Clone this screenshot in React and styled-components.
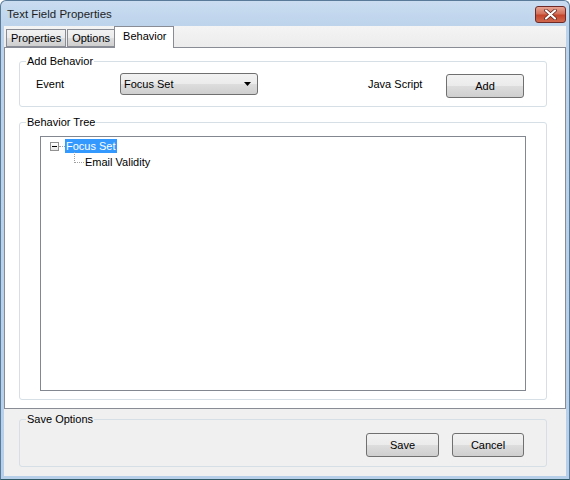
import React from "react";
import styled, { createGlobalStyle } from "styled-components";

const GlobalStyle = createGlobalStyle`
  html, body { margin: 0; padding: 0; background: #fff; }
  body {
    font-family: "Liberation Sans", Arial, sans-serif;
    font-size: 11px;
    color: #000;
  }
`;

const Window = styled.div`
  width: 570px;
  height: 480px;
  box-sizing: border-box;
  border: 1px solid #5a7a99;
  border-bottom-color: #2f5a66;
  border-radius: 6px 6px 0 0;
  background: linear-gradient(to bottom, #c9dcf0 0px, #bcd3eb 26px, #b7cfe9 100%);
  padding: 0 3px 3px 3px;
  display: flex;
  flex-direction: column;
`;

const TitleBar = styled.div`
  height: 25px;
  display: flex;
  align-items: center;
  justify-content: space-between;
  padding: 0 0 0 3px;
`;

const Title = styled.span`
  font-size: 11.5px;
  color: #1e1e1e;
`;

const CloseButton = styled.div`
  width: 31px;
  height: 17px;
  margin-top: 1px;
  box-sizing: border-box;
  border: 1px solid #6d2a26;
  border-radius: 3px;
  background: linear-gradient(to bottom, #e8a493 0%, #d3705b 45%, #c4452c 55%, #d0694f 100%);
  display: flex;
  align-items: center;
  justify-content: center;
`;

const Client = styled.div`
  flex: 1;
  background: #f0f0f0;
  display: flex;
  flex-direction: column;
`;

const TabStrip = styled.div`
  height: 21px;
  display: flex;
  align-items: flex-end;
  padding-left: 1px;
  position: relative;
  z-index: 1;
  background: linear-gradient(to bottom, #f4f4f4, #ececec);
`;

const Tab = styled.div`
  box-sizing: border-box;
  height: ${({ active }) => (active ? "22px" : "18px")};
  margin-bottom: ${({ active }) => (active ? "-1px" : "0")};
  margin-left: ${({ active }) => (active ? "-1px" : "1px")};
  padding: ${({ active }) => (active ? "3px 7px 0 8px" : "2px 4px 0")};
  border: 1px solid #898c95;
  border-bottom: ${({ active }) => (active ? "none" : "1px solid #898c95")};
  background: ${({ active }) =>
    active ? "#fff" : "linear-gradient(to bottom, #f2f2f2 0%, #ebebeb 50%, #dddddd 51%, #cfcfcf 100%)"};
  font-size: 11px;
  line-height: 13px;
`;

const Panel = styled.div`
  height: 362px;
  box-sizing: border-box;
  background: #fff;
  border: 1px solid #898c95;
  padding: 7px 17px 8px 14px;
  display: flex;
  flex-direction: column;
  gap: 9px;
`;

const Group = styled.fieldset`
  margin: 0;
  padding: 0;
  border: 1px solid #d5dfe5;
  border-radius: 3px;
  min-width: 0;
  width: 528px;
  box-sizing: border-box;
`;

const Legend = styled.legend`
  margin-left: 6px;
  padding: 0 1px;
  font-size: 11px;
  line-height: 13px;
`;

const GroupBody = styled.div`
  padding: ${({ pad }) => pad};
`;

const Row = styled.div`
  display: flex;
  align-items: flex-start;
  justify-content: ${({ end }) => (end ? "flex-end" : "flex-start")};
  gap: ${({ gap }) => gap || 0}px;
`;

const Label = styled.span`
  width: ${({ w }) => w}px;
  margin-left: ${({ ml }) => ml || 0}px;
  line-height: 22px;
  font-size: 11px;
`;

const Combo = styled.div`
  width: 138px;
  height: 22px;
  box-sizing: border-box;
  border: 1px solid #707070;
  border-radius: 3px;
  background: linear-gradient(to bottom, #f2f2f2 0%, #ebebeb 50%, #dddddd 51%, #cfcfcf 100%);
  display: flex;
  align-items: center;
  justify-content: space-between;
  padding: 0 6px 0 3px;
  font-size: 11px;
`;

const Button = styled.div`
  width: ${({ w }) => w}px;
  height: 24px;
  margin-top: ${({ mt }) => mt || 0}px;
  box-sizing: border-box;
  border: 1px solid #707070;
  border-radius: 3px;
  background: linear-gradient(to bottom, #f2f2f2 0%, #ebebeb 50%, #dddddd 51%, #cfcfcf 100%);
  display: flex;
  align-items: center;
  justify-content: center;
  font-size: 11px;
`;

const TreeBox = styled.div`
  width: 486px;
  height: 255px;
  box-sizing: border-box;
  border: 1px solid #828790;
  background: #fff;
  padding: 2px 0 0 9px;
`;

const TreeRow = styled.div`
  height: 14px;
  display: flex;
  align-items: center;
  padding-left: ${({ indent }) => indent || 0}px;
  margin-top: ${({ mt }) => mt || 0}px;
`;

const Expander = styled.div`
  width: 9px;
  height: 9px;
  box-sizing: border-box;
  border: 1px solid #919191;
  background: linear-gradient(to bottom, #fff, #e6e6e6);
  display: flex;
  align-items: center;
  justify-content: center;
  &::after {
    content: "";
    width: 5px;
    height: 1px;
    background: #000;
  }
`;

const HLine = styled.div`
  width: ${({ w }) => w}px;
  border-top: 1px dotted #a0a0a0;
`;

const Elbow = styled.div`
  width: 10px;
  height: 11px;
  align-self: flex-end;
  margin-bottom: 6px;
  border-left: 1px dotted #a0a0a0;
  border-bottom: 1px dotted #a0a0a0;
  box-sizing: border-box;
`;

const NodeText = styled.span`
  padding: 0 1px;
  line-height: 14px;
  font-size: 11px;
  background: ${({ selected }) => (selected ? "#3399ff" : "transparent")};
  color: ${({ selected }) => (selected ? "#fff" : "#000")};
`;

const SaveArea = styled.div`
  flex: 1;
  padding: 4px 0 0 15px;
`;

export default function App() {
  return (
    <>
      <GlobalStyle />
      <Window>
        <TitleBar>
          <Title>Text Field Properties</Title>
          <CloseButton>
            <svg width="13" height="11" viewBox="0 0 13 11">
              <path d="M2 1.5 L11 9.5 M11 1.5 L2 9.5" stroke="#5a1d18" strokeWidth="3.6" strokeLinecap="round" />
              <path d="M2 1.5 L11 9.5 M11 1.5 L2 9.5" stroke="#fff" strokeWidth="2.2" strokeLinecap="round" />
            </svg>
          </CloseButton>
        </TitleBar>
        <Client>
          <TabStrip>
            <Tab>Properties</Tab>
            <Tab>Options</Tab>
            <Tab active>Behavior</Tab>
          </TabStrip>
          <Panel>
            <Group>
              <Legend>Add Behavior</Legend>
              <GroupBody pad="5px 0 8px 16px">
                <Row>
                  <Label w={84}>Event</Label>
                  <Combo>
                    <span>Focus Set</span>
                    <svg width="7" height="4" viewBox="0 0 7 4">
                      <path d="M0 0 H7 L3.5 4 Z" fill="#000" />
                    </svg>
                  </Combo>
                  <Label w={78} ml={110}>Java Script</Label>
                  <Button w={78} mt={1}>Add</Button>
                </Row>
              </GroupBody>
            </Group>
            <Group>
              <Legend>Behavior Tree</Legend>
              <GroupBody pad="7px 0 8px 20px">
                <TreeBox>
                  <TreeRow>
                    <Expander />
                    <HLine w={6} />
                    <NodeText selected>Focus Set</NodeText>
                  </TreeRow>
                  <TreeRow indent={24} mt={2}>
                    <Elbow />
                    <NodeText>Email Validity</NodeText>
                  </TreeRow>
                </TreeBox>
              </GroupBody>
            </Group>
          </Panel>
          <SaveArea>
            <Group>
              <Legend>Save Options</Legend>
              <GroupBody pad="7px 22px 9px 0">
                <Row end gap={13}>
                  <Button w={73}>Save</Button>
                  <Button w={72}>Cancel</Button>
                </Row>
              </GroupBody>
            </Group>
          </SaveArea>
        </Client>
      </Window>
    </>
  );
}
